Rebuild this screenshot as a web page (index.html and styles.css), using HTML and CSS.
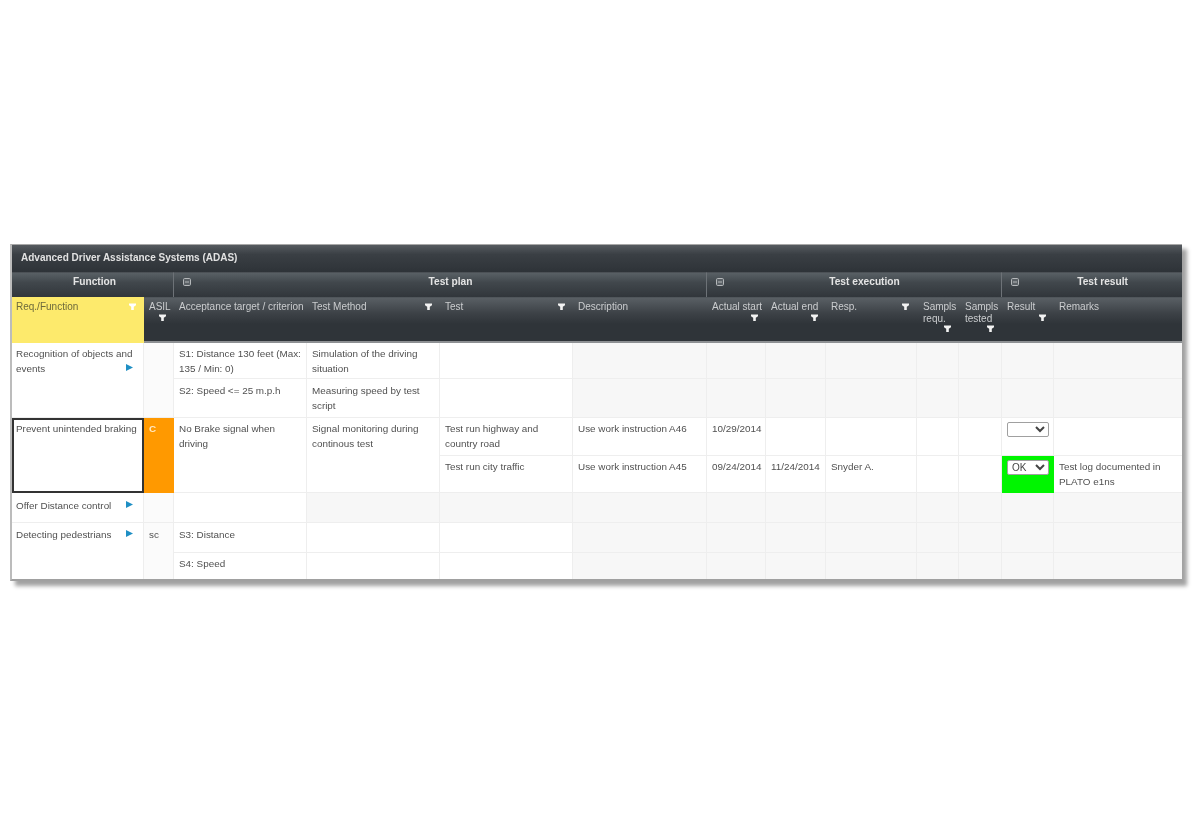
FILE: index.html
```html
<!DOCTYPE html>
<html lang="en">
<head>
<meta charset="utf-8">
<title>ADAS</title>
<link rel="stylesheet" href="styles.css">
</head>
<body>
<svg class="defs" width="0" height="0" aria-hidden="true">
  <symbol id="flt" viewBox="0 0 7 7"><path d="M0 0.5H7V2.2L4.8 3.8V7H2.2V3.8L0 2.2Z" fill="currentColor"/></symbol>
  <symbol id="tri" viewBox="0 0 7 7"><path d="M0 0L7 3.5L0 7Z" fill="currentColor"/></symbol>
  <symbol id="col" viewBox="0 0 8 8"><rect x=".5" y=".5" width="7" height="7" rx="1.2" fill="#5a6065" stroke="currentColor"/><path d="M2 4H6" stroke="currentColor"/></symbol>
</svg>
<main class="page">
<div class="grid">
<table>
  <colgroup>
    <col class="c1"><col class="c2"><col class="c3"><col class="c3"><col class="c3"><col class="c4"><col class="c5a"><col class="c5b"><col class="c6"><col class="c7a"><col class="c7b"><col class="c8"><col class="c9">
  </colgroup>
  <thead>
    <tr class="r-title"><th colspan="13">Advanced Driver Assistance Systems (ADAS)</th></tr>
    <tr class="r-group">
      <th colspan="2" class="g"><div class="gi"><span class="gt">Function</span></div></th>
      <th colspan="4" class="g"><div class="gi"><svg class="ic-col"><use href="#col"/></svg><span class="gt">Test plan</span></div></th>
      <th colspan="5" class="g"><div class="gi"><svg class="ic-col"><use href="#col"/></svg><span class="gt">Test execution</span></div></th>
      <th colspan="2" class="g g-last"><div class="gi"><svg class="ic-col"><use href="#col"/></svg><span class="gt">Test result</span></div></th>
    </tr>
    <tr class="r-head">
      <th class="h req">Req./Function<svg class="flt"><use href="#flt"/></svg></th>
      <th class="h">ASIL<svg class="flt below"><use href="#flt"/></svg></th>
      <th class="h nw">Acceptance target / criterion</th>
      <th class="h">Test Method<svg class="flt"><use href="#flt"/></svg></th>
      <th class="h">Test<svg class="flt"><use href="#flt"/></svg></th>
      <th class="h">Description</th>
      <th class="h nw">Actual start<svg class="flt below"><use href="#flt"/></svg></th>
      <th class="h nw">Actual end<svg class="flt below"><use href="#flt"/></svg></th>
      <th class="h">Resp.<svg class="flt"><use href="#flt"/></svg></th>
      <th class="h h6">Sampls requ.<svg class="flt below"><use href="#flt"/></svg></th>
      <th class="h h6">Sampls tested<svg class="flt below"><use href="#flt"/></svg></th>
      <th class="h">Result<svg class="flt below"><use href="#flt"/></svg></th>
      <th class="h">Remarks</th>
    </tr>
  </thead>
  <tbody>
    <tr class="r1">
      <td rowspan="2" class="f">Recognition of objects and events<svg class="tri"><use href="#tri"/></svg></td>
      <td rowspan="2" class="soft"></td>
      <td>S1: Distance 130 feet (Max: 135 / Min: 0)</td>
      <td>Simulation of the driving situation</td>
      <td></td><td class="gr"></td><td class="gr"></td><td class="gr"></td><td class="gr"></td><td class="gr"></td><td class="gr"></td><td class="gr"></td><td class="gr"></td>
    </tr>
    <tr class="r2">
      <td>S2: Speed &lt;= 25 m.p.h</td>
      <td>Measuring speed by test script</td>
      <td></td><td class="gr"></td><td class="gr"></td><td class="gr"></td><td class="gr"></td><td class="gr"></td><td class="gr"></td><td class="gr"></td><td class="gr"></td>
    </tr>
    <tr class="r3">
      <td rowspan="2" class="sel">Prevent unintended braking</td>
      <td rowspan="2" class="asil-c">C</td>
      <td rowspan="2">No Brake signal when driving</td>
      <td rowspan="2">Signal monitoring during continous test</td>
      <td>Test run highway and country road</td>
      <td>Use work instruction A46</td>
      <td>10/29/2014</td><td></td><td></td><td></td><td></td>
      <td class="pick"><select class="sl" aria-label="Result"><option></option><option>OK</option></select></td>
      <td></td>
    </tr>
    <tr class="r4">
      <td>Test run city traffic</td>
      <td>Use work instruction A45</td>
      <td>09/24/2014</td><td>11/24/2014</td><td>Snyder A.</td><td></td><td></td>
      <td class="pick ok"><select class="sl" aria-label="Result"><option>OK</option><option></option></select></td>
      <td>Test log documented in PLATO e1ns</td>
    </tr>
    <tr class="r5">
      <td class="f">Offer Distance control<svg class="tri"><use href="#tri"/></svg></td>
      <td class="soft"></td>
      <td></td>
      <td class="gr"></td><td class="gr"></td><td class="gr"></td><td class="gr"></td><td class="gr"></td><td class="gr"></td><td class="gr"></td><td class="gr"></td><td class="gr"></td><td class="gr"></td>
    </tr>
    <tr class="r6">
      <td rowspan="2" class="f">Detecting pedestrians<svg class="tri"><use href="#tri"/></svg></td>
      <td rowspan="2" class="soft">sc</td>
      <td>S3: Distance</td>
      <td></td><td></td><td class="gr"></td><td class="gr"></td><td class="gr"></td><td class="gr"></td><td class="gr"></td><td class="gr"></td><td class="gr"></td><td class="gr"></td>
    </tr>
    <tr class="r7">
      <td>S4: Speed</td>
      <td></td><td></td><td class="gr"></td><td class="gr"></td><td class="gr"></td><td class="gr"></td><td class="gr"></td><td class="gr"></td><td class="gr"></td><td class="gr"></td>
    </tr>
  </tbody>
</table>
</div>
</main>
</body>
</html>
```
FILE: styles.css
```css
html, body { margin: 0; background: #fff; }
body { height: 833px; overflow: hidden; font-family: "Liberation Sans", Arial, sans-serif; }
.defs { position: absolute; }
.page { padding: 244px 0 0 10px; display: flex; }
.grid {
  width: 1170px;
  border-top: 1px solid #a8a8a8;
  border-left: 2px solid #bcbcbc;
  border-bottom: 2px solid #a0a0a0;
  box-shadow: 5px 5px 4px #a2a2a2;
  filter: blur(0.6px);
}
table {
  width: 1170px;
  table-layout: fixed;
  border-collapse: separate;
  border-spacing: 0;
  font-size: 9.9px;
  color: #505050;
}
.c1 { width: 132px; }
.c2 { width: 30px; }
.c3 { width: 133px; }
.c4 { width: 134px; }
.c5a { width: 59px; }
.c5b { width: 60px; }
.c6 { width: 91px; }
.c7a { width: 42px; }
.c7b { width: 43px; }
.c8 { width: 52px; }
.c9 { width: 128px; }

th { text-align: left; font-weight: normal; vertical-align: top; padding: 0; }

.r-title { height: 27px; }
.r-title th {
  padding: 7px 0 0 9px;
  font-weight: bold;
  font-size: 10px;
  color: #e2e2e2;
  background: linear-gradient(#565b60 0, #3a3f44 35%, #2e3338 100%);
}

.r-group { height: 25px; }
.g {
  font-size: 10.2px;
  background: linear-gradient(#596065 0, #41474c 40%, #31363b 100%);
  border-right: 1px solid #6d7277;
  border-top: 1px solid #4c5156;
}
.g-last { border-right: 0; }
.gi { display: flex; align-items: flex-start; padding-top: 3px; color: #e4e4e4; }
.ic-col { width: 8px; height: 8px; margin: 2px 0 0 9px; color: #b5b8ba; flex: none; }
.gt { flex: 1; text-align: center; font-weight: bold; padding-left: 4px; line-height: 12px; }

.r-head { height: 46px; }
.h {
  padding: 3px 3px 0 5px;
  font-size: 10px;
  line-height: 11.5px;
  color: #cbcdcf;
  background: linear-gradient(#595f64 0, #3d4247 35%, #2f3439 60%, #2f3439 100%);
  border-top: 1px solid #50565b;
  border-bottom: 2px solid #8d9093;
}
.h6 { padding-left: 6px; padding-right: 2px; }
.nw { white-space: nowrap; overflow: visible; }
.req { padding-left: 4px; background: #fdea6c; color: #6d6a3c; border-top-color: #fdea6c; border-bottom-color: #fdea6c; }
.flt { float: right; width: 7px; height: 7px; margin: 2px 5px 0 0; color: #f2f2f2; }
.flt.below { float: none; display: block; margin: 1px 5px 0 auto; }
.h6 .flt.below { margin-right: 6px; }
.req .flt { color: #fff; }

td {
  padding: 3px 3px 0 5px;
  vertical-align: top;
  line-height: 15px;
  background: #fff;
  border-right: 1px solid #eeeeee;
  border-bottom: 1px solid #eeeeee;
}
td:last-child { border-right: 0; }
td.f { padding-left: 4px; }
.gr { background: #f7f7f7; }
.soft { background: #fbfbfb; }
.r1 { height: 36px; }
.r2 { height: 39px; }
.r3 { height: 38px; }
.r4 { height: 37px; }
.r5 { height: 30px; }
.r6 { height: 30px; }
.r7 { height: 26px; }
.r7 td, tr.r6 td[rowspan] { border-bottom: 0; }
.r2 td { padding-top: 4px; }
.r3 td, .r4 td { padding-top: 3px; }
.r5 td { padding-top: 5px; }
.r6 td { padding-top: 4px; }
.r7 td { padding-top: 3px; }

.tri { float: right; width: 7px; height: 7px; margin: 3px 7px 0 0; color: #1f8fc4; }
.r3 td.sel { box-shadow: inset 0 0 0 2px #333; padding: 3px 2px 0 4px; border: 0; }
.asil-c { background: #ff9900; color: #ffe9c4; font-weight: bold; border-color: #ff9900; }
.r3 td.pick { padding: 4px 0 0 5px; }
.r4 td.ok { background: #00f500; border-color: #00f500; padding: 4px 0 0 5px; }
.sl {
  display: block;
  width: 42px;
  height: 15px;
  padding: 0;
  font: 10px "Liberation Sans", Arial, sans-serif;
  color: #444;
  background: #fff;
  border: 1px solid #a0a0a0;
  border-radius: 2px;
}
```
